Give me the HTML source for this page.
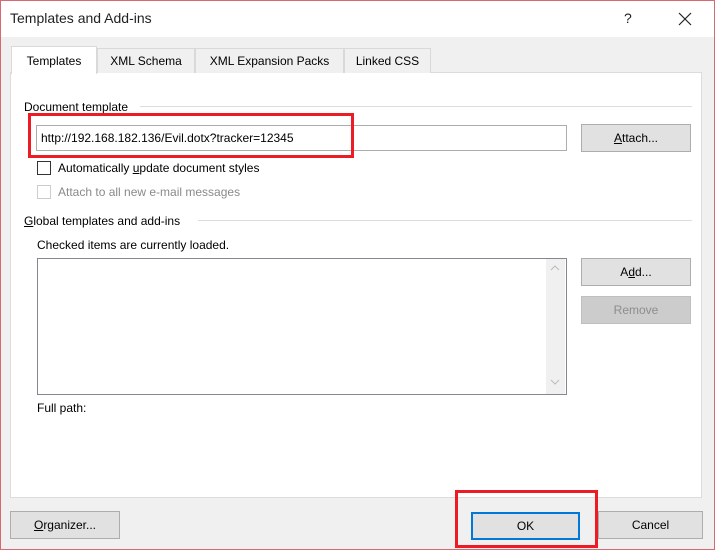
<!DOCTYPE html>
<html><head><meta charset="utf-8"><style>
*{box-sizing:border-box;margin:0;padding:0}
body{width:715px;height:550px;overflow:hidden;font-family:"Liberation Sans",sans-serif;font-size:12px;color:#000;background:#f0f0f0;position:relative}
.a{position:absolute}
.win{left:0;top:0;width:715px;height:550px;border:1px solid #d46a72}
.title{left:1px;top:1px;width:713px;height:36px;background:#fff}
.btn{position:absolute;background:#e1e1e1;border:1px solid #adadad;text-align:center;font-size:12px;line-height:26px}
.tab{position:absolute;top:48px;height:25px;background:#f0f0f0;border:1px solid #d9d9d9;border-bottom:none;text-align:center;line-height:25px;font-size:12px}
.red{position:absolute;border:3px solid #ed1c24}
.line{position:absolute;height:1px;background:#dcdcdc}
</style></head><body>
<div class="a win"></div>
<div class="a title"></div>
<div class="a" style="left:10px;top:10px;font-size:14px;color:#222">Templates and Add-ins</div>
<div class="a" style="left:624px;top:10px;font-size:14px;color:#222">?</div>
<svg class="a" style="left:677px;top:11px" width="16" height="16"><path d="M2 2L14 14M14 2L2 14" stroke="#222" stroke-width="1.2"/></svg>

<div class="a" style="left:10px;top:72px;width:692px;height:426px;background:#fff;border:1px solid #dcdcdc"></div>
<div class="tab" style="left:11px;top:46px;width:86px;height:28px;background:#fff;border-color:#d9d9d9;line-height:28px">Templates</div>
<div class="tab" style="left:97px;width:98px">XML Schema</div>
<div class="tab" style="left:195px;width:149px">XML Expansion Packs</div>
<div class="tab" style="left:344px;width:87px">Linked CSS</div>

<div class="a" style="left:24px;top:100px">Document template</div>
<div class="line" style="left:140px;top:106px;width:552px"></div>
<div class="a" style="left:36px;top:125px;width:531px;height:26px;border:1px solid #adadad;background:#fff;padding-left:4px;line-height:24px">http://192.168.182.136/Evil.dotx?tracker=12345</div>
<div class="red" style="left:28px;top:113px;width:326px;height:45px"></div>
<div class="btn" style="left:581px;top:124px;width:110px;height:28px"><u>A</u>ttach...</div>

<div class="a" style="left:37px;top:161px;width:14px;height:14px;border:1px solid #333;background:#fff"></div>
<div class="a" style="left:58px;top:161px">Automatically <u>u</u>pdate document styles</div>
<div class="a" style="left:37px;top:185px;width:14px;height:14px;border:1px solid #ccc;background:#fff"></div>
<div class="a" style="left:58px;top:185px;color:#8a8a8a">Attach to all new e-mail messages</div>

<div class="a" style="left:24px;top:214px"><u>G</u>lobal templates and add-ins</div>
<div class="line" style="left:198px;top:220px;width:494px"></div>
<div class="a" style="left:37px;top:238px">Checked items are currently loaded.</div>
<div class="a" style="left:37px;top:258px;width:530px;height:137px;border:1px solid #828790;background:#fff"></div>
<div class="a" style="left:546px;top:259px;width:19px;height:135px;background:#f0f0f0"></div>
<svg class="a" style="left:550px;top:264px" width="10" height="8"><path d="M1 6L5 2L9 6" stroke="#bbb" fill="none"/></svg>
<svg class="a" style="left:550px;top:378px" width="10" height="8"><path d="M1 2L5 6L9 2" stroke="#bbb" fill="none"/></svg>
<div class="btn" style="left:581px;top:258px;width:110px;height:28px">A<u>d</u>d...</div>
<div class="btn" style="left:581px;top:296px;width:110px;height:28px;background:#ccc;border-color:#bfbfbf;color:#8d8d8d">Remove</div>
<div class="a" style="left:37px;top:401px">Full path:</div>

<div class="btn" style="left:10px;top:511px;width:110px;height:28px"><u>O</u>rganizer...</div>
<div class="btn" style="left:471px;top:512px;width:109px;height:28px;border:2px solid #0078d7;line-height:24px">OK</div>
<div class="red" style="left:455px;top:490px;width:143px;height:58px"></div>
<div class="btn" style="left:598px;top:511px;width:105px;height:28px">Cancel</div>
</body></html>
